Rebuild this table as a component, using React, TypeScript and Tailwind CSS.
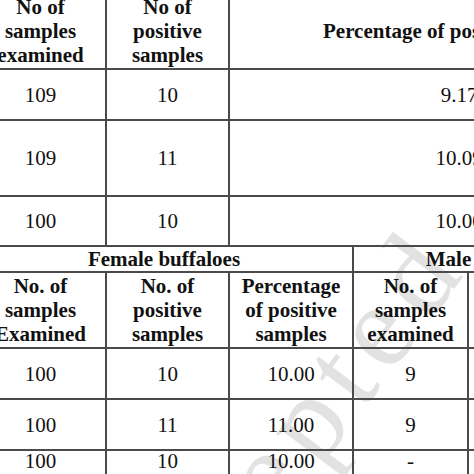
import React from 'react';

const line = 'border-r-2 border-b-2 border-[#4a4a4a]';

interface CellProps {
  w: string;
  bold?: boolean;
  children?: React.ReactNode;
  top?: boolean;
}

const Cell: React.FC<CellProps> = ({ w, bold, top, children }) => (
  <div
    className={`${w} ${line} shrink-0 flex justify-center text-center ${
      top ? 'items-start leading-[20px]' : 'items-center'
    } ${bold ? 'font-bold' : ''}`}
  >
    <div>{children}</div>
  </div>
);

const topRows = [
  { h: 'h-[51px]', cells: ['109', '10', '9.17'] },
  { h: 'h-[76px]', cells: ['109', '11', '10.09'] },
  { h: 'h-[50px]', cells: ['100', '10', '10.00'] },
];

const bottomRows = [
  { h: 'h-[51px]', cells: ['100', '10', '10.00', '9', '1'] },
  { h: 'h-[51px]', cells: ['100', '11', '11.00', '9', '1'] },
  { h: 'h-[40px]', cells: ['100', '10', '10.00', '-', '-'], top: true },
];

const widths = ['w-[131px]', 'w-[123px]', 'w-[124px]', 'w-[115px]', 'w-[163px]'];

export default function App() {
  return (
    <div className="relative w-[474px] h-[474px] overflow-hidden bg-white text-[#111] font-['Liberation_Serif','Times_New_Roman',serif] text-[21px] leading-[24px]">
      {/* faint watermark behind the table */}
      <span className="absolute left-[0px] top-[401px] w-[549px] text-center text-[120px] leading-[120px] tracking-[12px] text-[#e2e2e2] -rotate-[53deg] select-none pointer-events-none whitespace-nowrap">
        Accepted
      </span>

      <div className="relative -ml-[24px] -mt-[6px]">
        {/* upper table */}
        <div className="flex h-[76px]">
          <Cell w={widths[0]} bold>
            No of<br />samples<br />examined
          </Cell>
          <Cell w={widths[1]} bold>
            No of<br />positive<br />samples
          </Cell>
          <Cell w="w-[460px]" bold>
            <span className="whitespace-nowrap">Percentage of positive samples</span>
          </Cell>
        </div>
        {topRows.map((r, i) => (
          <div key={i} className={`flex ${r.h}`}>
            <Cell w={widths[0]}>{r.cells[0]}</Cell>
            <Cell w={widths[1]}>{r.cells[1]}</Cell>
            <Cell w="w-[460px]">{r.cells[2]}</Cell>
          </div>
        ))}

        {/* lower table */}
        <div className="flex h-[26px]">
          <Cell w="w-[378px]" bold>
            <span className="whitespace-nowrap">Female buffaloes</span>
          </Cell>
          <Cell w="w-[278px]" bold>
            <span className="whitespace-nowrap">Male buffaloes</span>
          </Cell>
        </div>
        <div className="flex h-[76px]">
          <Cell w={widths[0]} bold>
            No. of<br />samples<br />Examined
          </Cell>
          <Cell w={widths[1]} bold>
            No. of<br />positive<br />samples
          </Cell>
          <Cell w={widths[2]} bold>
            Percentage<br />of positive<br />samples
          </Cell>
          <Cell w={widths[3]} bold>
            No. of<br />samples<br />examined
          </Cell>
          <Cell w={widths[4]} bold>
            No. of<br />positive<br />samples
          </Cell>
        </div>
        {bottomRows.map((r, i) => (
          <div key={i} className={`flex ${r.h}`}>
            {r.cells.map((c, j) => (
              <Cell key={j} w={widths[j]} top={r.top}>
                {c}
              </Cell>
            ))}
          </div>
        ))}
      </div>
    </div>
  );
}
